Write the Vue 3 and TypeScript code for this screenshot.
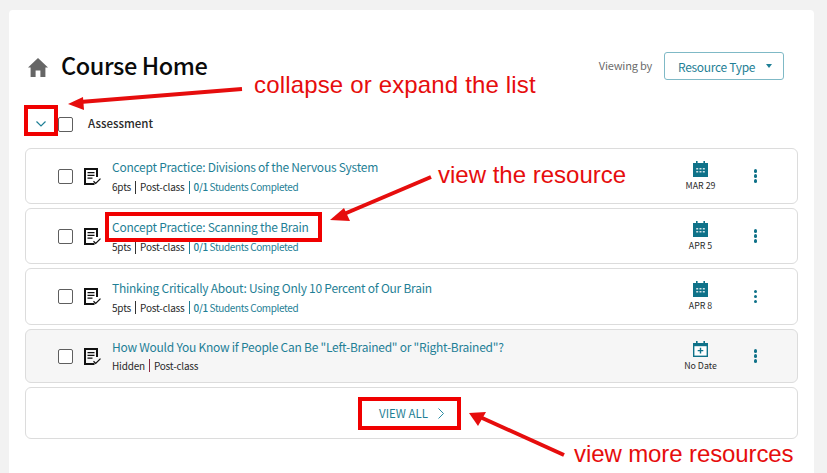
<template>
  <div class="page">
    <div class="panel">
      <header class="head">
        <svg class="home" viewBox="0 0 20 19" width="20" height="19"><path d="M10 0 L20 9.6 L17.4 9.6 L17.4 19 L12.4 19 L12.4 12.5 L7.6 12.5 L7.6 19 L2.6 19 L2.6 9.6 L0 9.6 Z" fill="#666" /></svg>
        <h1>Course Home</h1>
        <span class="viewing">Viewing by</span>
        <div class="select">
          <span>Resource Type</span>
          <i class="caret"></i>
        </div>
      </header>

      <div class="group">
        <svg class="chev" viewBox="0 0 10 6" width="10" height="6"><path d="M.5.5 5 5 9.5.5" fill="none" stroke="#1f7f96" stroke-width="1.2" /></svg>
        <span class="check"></span>
        <strong>Assessment</strong>
      </div>

      <div class="list">
        <div v-for="r in rows" :key="r.title" class="row" :class="{ hidden: r.hidden }" :style="{ height: r.h + 'px' }">
          <span class="check"></span>
          <svg class="doc" viewBox="0 0 17 17" width="17" height="17">
            <path d="M10.5 16H1V1h12v8" fill="none" stroke="#111" stroke-width="2" />
            <path d="M3.5 4.7h7M3.5 7.4h7M3.5 10.1h5" fill="none" stroke="#111" stroke-width="1.3" />
            <path d="M9.5 13.2l2.2 2.2 4.8-4.8" fill="none" stroke="#111" stroke-width="1.3" />
          </svg>
          <div class="main">
            <a class="title">{{ r.title }}</a>
            <div class="meta" v-if="r.hidden">
              <span>Hidden</span><i class="sep maroon"></i><span>Post-class</span>
            </div>
            <div class="meta" v-else>
              <span>{{ r.pts }}</span><i class="sep dark"></i><span>Post-class</span><i class="sep blue"></i>
              <span class="done"><b>0/1</b> Students Completed</span>
            </div>
          </div>
          <div class="due">
            <svg viewBox="0 0 15 16" width="15" height="16">
              <path d="M3 0h1.6v2h5.8V0H12v2h3v14H0V2h3z" fill="#0f7289" />
              <rect v-if="r.hidden" x="1.4" y="5.2" width="12.2" height="9.4" fill="#fff" />
              <path v-if="r.hidden" d="M7.5 6.8v5.6M4.7 9.6h5.6" stroke="#0f7289" stroke-width="1.4" />
              <path v-else d="M3.2 7h2v1.6h-2zM6.5 7h2v1.6h-2zM9.8 7h2v1.6h-2zM3.2 10h2v1.6h-2zM6.5 10h2v1.6h-2zM9.8 10h2v1.6h-2z" fill="#cfe3e8" />
            </svg>
            <span>{{ r.date }}</span>
          </div>
          <div class="more"><i></i><i></i><i></i></div>
        </div>

        <div class="row all">
          <span class="all-text">VIEW ALL</span>
          <svg viewBox="0 0 6 11" width="6" height="11"><path d="M.5.5 5.5 5.5.5 10.5" fill="none" stroke="#2a8ca3" stroke-width="1" /></svg>
        </div>
      </div>
    </div>

    <!-- annotations painted over the screenshot -->
    <svg class="marks" width="827" height="473" viewBox="0 0 827 473">
      <g fill="none" stroke="#f00000" stroke-width="4">
        <rect x="26" y="107" width="30" height="27" />
        <rect x="107" y="214" width="213" height="26" />
        <rect x="360" y="399" width="99" height="29" />
      </g>
      <g stroke="#e60d0d" stroke-width="4" fill="none">
        <path d="M242 89 80 102" />
        <path d="M431 177 344 214" />
        <path d="M564 455 480 417" />
      </g>
      <g fill="#e60d0d">
        <path d="M68 104 83 97 84 110Z" />
        <path d="M330 220 344 208 350 221Z" />
        <path d="M469 413 486 412 478 426Z" />
      </g>
    </svg>
    <span class="note n1">collapse or expand the list</span>
    <span class="note n2">view the resource</span>
    <span class="note n3">view more resources</span>
  </div>
</template>

<script setup lang="ts">
interface Row {
  title: string
  pts?: string
  date: string
  h: number
  hidden?: boolean
}

const rows: Row[] = [
  { title: 'Concept Practice: Divisions of the Nervous System', pts: '6pts', date: 'MAR 29', h: 56 },
  { title: 'Concept Practice: Scanning the Brain', pts: '5pts', date: 'APR 5', h: 56 },
  { title: 'Thinking Critically About: Using Only 10 Percent of Our Brain', pts: '5pts', date: 'APR 8', h: 57 },
  { title: 'How Would You Know if People Can Be "Left-Brained" or "Right-Brained"?', date: 'No Date', h: 54, hidden: true },
]
</script>

<style>
html, body {
  margin: 0;
  background: #f2f2f2;
}
</style>

<style scoped>
.page {
  position: relative;
  width: 827px;
  height: 473px;
  overflow: hidden;
  font-family: "Noto Sans CJK SC", "Noto Sans", sans-serif;
  color: #1a1a1a;
}
.panel {
  box-sizing: border-box;
  margin: 10px 0 0 9px;
  width: 805px;
  height: 463px;
  padding: 42px 16px 0;
  background: #fff;
  border-radius: 4px 4px 0 0;
}
.head {
  display: flex;
  align-items: center;
  height: 28px;
}
.home {
  margin: 2px 0 0 3px;
}
h1 {
  margin: -2px 0 0 13px;
  font-size: 23.5px;
  font-weight: 500;
  letter-spacing: -.4px;
  color: #0a0a0a;
}
.viewing {
  margin-left: auto;
  margin-top: -3px;
  font-size: 11px;
  letter-spacing: -.2px;
  color: #6b6b6b;
}
.select {
  box-sizing: border-box;
  display: flex;
  align-items: center;
  width: 120px;
  height: 28px;
  margin: 0 14px 0 12px;
  padding: 0 11px 0 13px;
  border: 1px solid #7fb9c6;
  border-radius: 3px;
  font-size: 12px;
  letter-spacing: -.3px;
  white-space: nowrap;
  color: #1f7f96;
}
.caret {
  margin: -1px 0 0 auto;
  border-left: 3.5px solid transparent;
  border-right: 3.5px solid transparent;
  border-top: 4px solid #1f7f96;
}
.group {
  display: flex;
  align-items: center;
  height: 16px;
  margin-top: 36px;
  padding-left: 11px;
}
.group strong {
  margin: -2px 0 0 15px;
  font-size: 11.5px;
  font-weight: 500;
  color: #2a2a2a;
}
.chev {
  margin-right: 12px;
}
.check {
  box-sizing: border-box;
  flex: none;
  width: 15px;
  height: 15px;
  background: #fff;
  border: 1px solid #5e5e5e;
  border-radius: 2px;
}
.list {
  display: flex;
  flex-direction: column;
  gap: 4px;
  margin-top: 16px;
}
.row {
  box-sizing: border-box;
  display: flex;
  align-items: center;
  width: 773px;
  padding: 0 0 0 32px;
  border: 1px solid #dcdcdc;
  border-radius: 6px;
}
.row.hidden {
  background: #f6f6f6;
}
.row.hidden .main {
  margin-top: -2px;
}
.row.hidden .meta {
  margin-top: 4px;
}
.doc {
  margin: 0 0 0 11px;
  flex: none;
}
.main {
  flex: 1;
  margin-left: 11px;
}
.title {
  display: block;
  font-size: 12px;
  letter-spacing: -.25px;
  line-height: 17px;
  color: #1f7f96;
}
.meta {
  display: flex;
  align-items: center;
  margin-top: 5px;
  font-size: 10px;
  letter-spacing: -.2px;
  line-height: 14px;
  color: #2a2a2a;
}
.sep {
  width: 1px;
  height: 13px;
  margin: 0 4px;
}
.sep.dark { background: #333; }
.sep.blue { background: #1f7f96; }
.sep.maroon { background: #8c2a44; }
.done {
  color: #1f7f96;
  letter-spacing: -.38px;
}
.done b {
  font-weight: 500;
}
.due {
  display: flex;
  flex-direction: column;
  align-items: center;
  width: 60px;
  margin-left: 3px;
  font-size: 8.8px;
  line-height: 12px;
  color: #2a2a2a;
}
.due svg {
  margin-bottom: 3px;
}
.more {
  display: flex;
  flex-direction: column;
  gap: 1.5px;
  margin: 0 40px 0 23px;
}
.more i {
  width: 3.5px;
  height: 3.5px;
  border-radius: 50%;
  background: #0f7289;
}
.row.all {
  height: 52px;
  padding: 0;
  justify-content: center;
  gap: 10px;
  background: #fff;
}
.all-text {
  font-size: 11.5px;
  color: #1f7f96;
}
.marks {
  position: absolute;
  left: 0;
  top: 0;
}
.note {
  position: absolute;
  font-family: "Liberation Sans", Arial, sans-serif;
  font-size: 24px;
  line-height: 28px;
  color: #e60d0d;
  white-space: nowrap;
}
.n1 { left: 254px; top: 71px; letter-spacing: .16px; }
.n2 { left: 438px; top: 161px; }
.n3 { left: 574px; top: 440px; letter-spacing: -.1px; }
</style>
